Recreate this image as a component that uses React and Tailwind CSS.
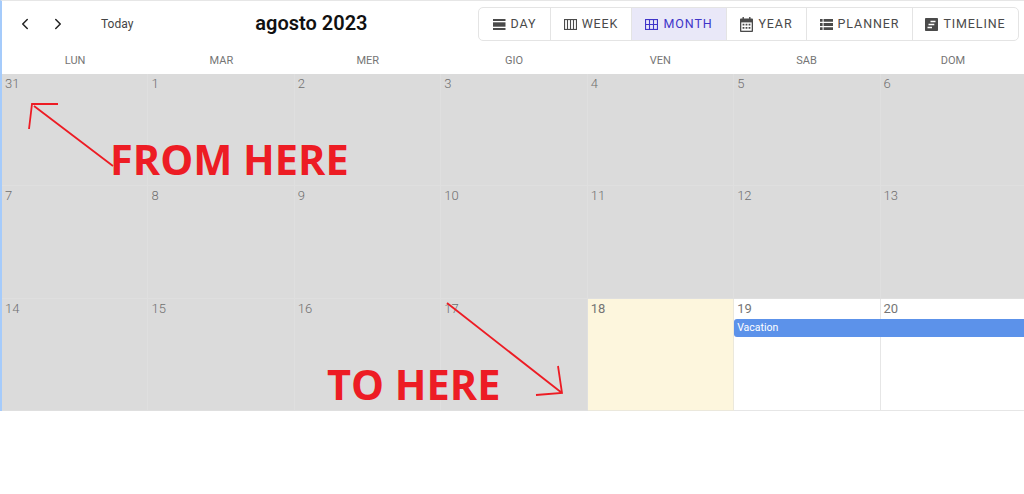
import { ChevronLeft, ChevronRight } from "lucide-react";

const weekDays = ["LUN", "MAR", "MER", "GIO", "VEN", "SAB", "DOM"];

const days = [
  31, 1, 2, 3, 4, 5, 6, 7, 8, 9, 10, 11, 12, 13, 14, 15, 16, 17, 18, 19, 20,
];

const DayIcon = () => (
  <svg width="13" height="11" viewBox="0 0 13 11" fill="currentColor">
    <rect x="0" y="0" width="12.500" height="2" />
    <rect x="0" y="3.300" width="12.500" height="4.400" />
    <rect x="0" y="9" width="12.500" height="2" />
  </svg>
);

const WeekIcon = () => (
  <svg width="13" height="11" viewBox="0 0 13 11" fill="none" stroke="currentColor" strokeWidth="1.100">
    <rect x="0.550" y="0.550" width="11.900" height="9.900" />
    <path d="M3.500 0.500v10M6.500 0.500v10M9.500 0.500v10" />
  </svg>
);

const MonthIcon = () => (
  <svg width="13" height="11" viewBox="0 0 13 11" fill="none" stroke="currentColor" strokeWidth="1.100">
    <rect x="0.550" y="0.550" width="11.900" height="9.900" />
    <path d="M0.500 5.500h12M4.500 0.500v10M8.500 0.500v10" />
  </svg>
);

const YearIcon = () => (
  <svg width="13" height="15" viewBox="0 0 13 15" fill="currentColor">
    <path d="M2.500 0h1.400v1.500h5.200V0h1.400v1.500h1.400c.6 0 1.100.5 1.100 1.100v11.300c0 .6-.5 1.100-1.100 1.100H1.100C.5 15 0 14.500 0 13.900V2.600C0 2 .5 1.500 1.100 1.500h1.400z" />
    <rect x="1.300" y="5.400" width="10.400" height="8.300" fill="#fff" />
    <path d="M2.600 6.700h1.800v1.800H2.600zM5.600 6.700h1.800v1.800H5.600zM8.600 6.700h1.800v1.800H8.600zM2.600 9.900h1.800v1.800H2.600zM5.600 9.900h1.800v1.800H5.600zM8.600 9.900h1.800v1.800H8.600z" />
  </svg>
);

const PlannerIcon = () => (
  <svg width="13" height="11" viewBox="0 0 13 11" fill="currentColor">
    <path d="M0 0h2.600v2.800H0zM3.600 0H13v2.800H3.600zM0 4.100h2.600v2.800H0zM3.600 4.100H13v2.800H3.600zM0 8.200h2.600V11H0zM3.600 8.200H13V11H3.600z" />
  </svg>
);

const TimelineIcon = () => (
  <svg width="13" height="13" viewBox="0 0 13 13">
    <rect x="0" y="0" width="13" height="13" rx="0.800" fill="currentColor" />
    <path d="M5.500 2.800h5v1.500h-5zM3.500 5.800h5.800v1.500H3.500zM2.500 8.800h4.500v1.500H2.500z" fill="#fff" />
  </svg>
);

const views = [
  { label: "DAY", icon: <DayIcon />, w: "w-[72px]" },
  { label: "WEEK", icon: <WeekIcon />, w: "w-[81px]" },
  { label: "MONTH", icon: <MonthIcon />, w: "w-[95px]", active: true },
  { label: "YEAR", icon: <YearIcon />, w: "w-[80px]" },
  { label: "PLANNER", icon: <PlannerIcon />, w: "w-[106px]" },
  { label: "TIMELINE", icon: <TimelineIcon />, w: "w-[105px]" },
];

const ViewButton = ({ view }) => {
  return (
    <button
      className={`${view.w} flex items-center justify-center gap-[5px] border-r border-[#e4e4e4] last:border-r-0 text-[12.500px] font-normal tracking-[0.900px] ${
        view.active ? "bg-[#e9e8f8] text-[#3f35c9]" : "text-[#4a4a4a]"
      }`}
    >
      {view.icon}
      {view.label}
    </button>
  );
};

const DayCell = ({ day }) => {
  let isToday = day === 18;
  let isFree = day === 19 || day === 20;
  let bg = "bg-[#dbdbdb] border-[#dfdfdf]";
  if (isToday) bg = "bg-[#fdf6dd] border-[#ebe8dc]";
  if (isFree) bg = "bg-white border-[#e6e6e6]";

  return (
    <div
      className={`relative border-r border-b pl-[3px] pt-[1px] text-[13px] leading-[18px] ${bg} ${
        isToday || isFree ? "text-[#757575]" : "font-light text-[#6f6f6f]"
      }`}
    >
      {day}
      {day === 19 && (
        <div className="absolute left-0 top-[20px] z-10 h-[18px] w-[300px] rounded-[3px] bg-[#5c92ea] pl-[3px] text-[10.500px] font-normal leading-[18px] text-white">
          Vacation
        </div>
      )}
    </div>
  );
};

const App = () => {
  return (
    <div className="relative h-[494px] w-full overflow-hidden bg-white font-['Roboto',sans-serif]">
      <div className="border-t border-l-2 border-t-[#e6e6e6] border-l-[#a5cbfb]">
        {/* toolbar */}
        <div className="flex h-[47px] items-center pb-[1px]">
          <ChevronLeft size={18} strokeWidth={2} className="ml-[14px] text-[#222]" />
          <ChevronRight size={18} strokeWidth={2} className="ml-[15px] text-[#222]" />
          <span className="ml-[34px] text-[12px] text-[#444]">Today</span>
          <h1 className="mb-[2px] ml-[122px] text-[20px] font-semibold text-[#111]">agosto 2023</h1>
          <div className="ml-auto mr-[5px] flex h-[34px] overflow-hidden rounded-[5px] border border-[#e4e4e4]">
            {views.map((view) => (
              <ViewButton key={view.label} view={view} />
            ))}
          </div>
        </div>

        {/* week days */}
        <div className="grid h-[26px] w-[1024px] grid-cols-7 items-center text-center text-[11px] text-[#757575]">
          {weekDays.map((d) => (
            <span key={d}>{d}</span>
          ))}
        </div>

        {/* month grid */}
        <div className="grid w-[1025px] grid-cols-7 grid-rows-[112px_113px_112px]">
          {days.map((d) => (
            <DayCell key={d} day={d} />
          ))}
        </div>
      </div>

      {/* hand drawn notes on top of the screenshot */}
      <svg className="absolute left-0 top-0 z-20" width="1024" height="494" fill="none" stroke="#ed1c24" strokeWidth="1.800">
        <path d="M113 166L34 106M58 104H32L29 129" />
        <path d="M447 303L562 393M558 366L562 393L536 395" />
      </svg>
      <span className="absolute left-[110px] top-[129px] z-20 font-['Open_Sans',sans-serif] text-[41.500px] font-bold leading-[60px] text-[#ed1c24]">
        FROM HERE
      </span>
      <span className="absolute left-[327px] top-[354px] z-20 font-['Open_Sans',sans-serif] text-[41.500px] font-bold leading-[60px] text-[#ed1c24]">
        TO HERE
      </span>
    </div>
  );
};
export default App;
